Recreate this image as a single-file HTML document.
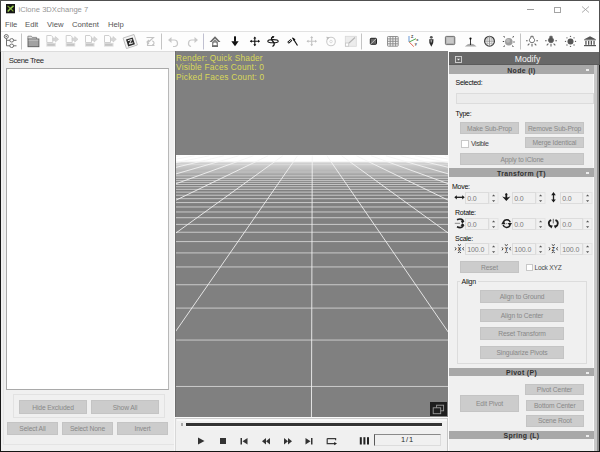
<!DOCTYPE html>
<html><head><meta charset="utf-8">
<style>
*{box-sizing:border-box;margin:0;padding:0}
html,body{width:600px;height:452px;overflow:hidden;background:#f0f0f0;font-family:"Liberation Sans",sans-serif}
.a{position:absolute}
.t{position:absolute;white-space:nowrap;line-height:1}
.btn{position:absolute;background:#cccccc;border:1px solid #c4c4c4;color:#888;font-size:6.7px;letter-spacing:-0.12px;text-align:center;white-space:nowrap;display:flex;align-items:center;justify-content:center}
.hdr{position:absolute;left:449px;width:145px;background:#a8a8a8;color:#303030;font-weight:bold;font-size:6.9px;letter-spacing:0.35px;text-align:center;padding-top:0.8px}
.hdr i{position:absolute;right:5px;top:4.4px;width:3px;height:1.2px;background:#ececec}
.lbl{position:absolute;font-size:7px;color:#151515;white-space:nowrap;line-height:1;letter-spacing:-0.25px;color:#0a0a0a}
.fld{position:absolute;background:#f0f0f0;border:1px solid #dcdcdc;color:#7a7a7a;font-size:7px;line-height:11px;padding-left:1.2px;white-space:nowrap;letter-spacing:-0.1px}
.spin{position:absolute;width:9px;border:1px solid #e6e6e6;border-left:none}
.spin:before,.spin:after{content:"";position:absolute;left:3px;width:0;height:0;border-left:1.6px solid transparent;border-right:1.6px solid transparent}
.spin:before{top:2.4px;border-bottom:1.8px solid #555}
.spin:after{bottom:1.6px;border-top:1.8px solid #555}
.tb{position:absolute;top:34px;width:16px;height:16px}
.sep{position:absolute;top:33px;width:1px;height:16px;background:#c8c8c8}
</style></head><body>
<!-- window frame -->
<div class="a" style="left:0;top:0;width:600px;height:452px;background:#f0f0f0"></div>
<!-- title bar + menu -->
<div class="a" style="left:0;top:0;width:600px;height:32px;background:#fff"></div>
<div class="a" style="left:0;top:31px;width:600px;height:1px;background:#e2e2e2"></div>
<!-- logo -->
<svg class="a" style="left:5.8px;top:4.4px" width="9" height="9.3" viewBox="0 0 9 9.3">
<rect width="9" height="9.3" fill="#151515"/>
<path d="M1.6 2 Q4.5 4.2 7.4 7.4" stroke="#7fa838" stroke-width="1.1" fill="none"/><path d="M1.7 7.4 Q4.3 4.4 7.5 1.8" stroke="#95c64a" stroke-width="1.5" fill="none"/>
</svg>
<div class="t" style="left:18.5px;top:6px;font-size:7.6px;color:#969696">iClone 3DXchange 7</div>
<!-- window controls -->
<div class="a" style="left:526.5px;top:9px;width:7px;height:1px;background:#a0a0a0"></div>
<div class="a" style="left:554px;top:6.5px;width:7px;height:6px;border:1px solid #a4a4a4"></div>
<svg class="a" style="left:581px;top:6px" width="9" height="7" viewBox="0 0 9 7"><path d="M1 0.5 L8 6.5 M8 0.5 L1 6.5" stroke="#9a9a9a" stroke-width="0.8"/></svg>
<!-- menu -->
<div class="t" style="left:5px;top:21px;font-size:7.7px;color:#555">File</div>
<div class="t" style="left:25px;top:21px;font-size:7.7px;color:#555">Edit</div>
<div class="t" style="left:47px;top:21px;font-size:7.7px;color:#555">View</div>
<div class="t" style="left:72px;top:21px;font-size:7.7px;color:#555">Content</div>
<div class="t" style="left:108px;top:21px;font-size:7.7px;color:#555">Help</div>

<!-- toolbar -->
<div class="a" style="left:0;top:32px;width:600px;height:20px;background:#fdfdfd"></div>
<div class="a" style="left:0;top:51px;width:175px;height:1px;background:#dcdcdc"></div>
<svg class="a" style="left:0;top:0" width="600" height="52" viewBox="0 0 600 52"><path d="M21.5 33.5 V49.5" stroke="#c4c4c4" stroke-width="1"/><path d="M161.5 33.5 V49.5" stroke="#c4c4c4" stroke-width="1"/><path d="M203.5 33.5 V49.5" stroke="#c0c0d0" stroke-width="1"/><path d="M361.5 33.5 V49.5" stroke="#c4c4c4" stroke-width="1"/><path d="M520.5 33.5 V49.5" stroke="#c4c4c4" stroke-width="1"/><g fill="none" stroke="#6e6e6e" stroke-width="1"><circle cx="6.3" cy="36.5" r="2"/><path d="M6.5 38.5 V45.8 H10 M6.5 40.3 H10 M13.6 40.3 H16.5 M13.6 45.8 H16.5"/><rect x="9.8" y="38.6" width="3.8" height="3.4" rx="1.7"/><rect x="9.8" y="44.1" width="3.8" height="3.4" rx="1.7"/></g><circle cx="6.3" cy="36.5" r="0.8" fill="#777"/><path d="M27.9 39.2 V36.2 H31.4 L32.2 37.4 H36.6 V39.2" fill="#e0e0e0" stroke="#7a7a7a" stroke-width="0.8"/><rect x="28" y="39" width="10.9" height="7.7" fill="#a2a2a2" stroke="#5a5a5a" stroke-width="0.9"/><rect x="28.6" y="39.6" width="9.7" height="1" fill="#c8c8c8"/><g fill="none" stroke="#cfcfcf" stroke-width="1"><path d="M46.8 35.5 H51.3 L52.8 37 V42.5 H46.8 Z"/></g><path d="M52.8 38.2 H55.3 V36.5 L58.599999999999994 39.3 L55.3 42.1 V40.4 H52.8 Z" fill="#d6d6d6" stroke="#c8c8c8" stroke-width="0.6"/><rect x="46.3" y="43" width="9.5" height="3.6" fill="#dedede"/><rect x="47.3" y="43.8" width="7.5" height="2" fill="#c4c4c4"/><g fill="none" stroke="#cfcfcf" stroke-width="1"><path d="M66.2 35.5 H70.7 L72.2 37 V42.5 H66.2 Z"/></g><path d="M72.2 38.2 H74.7 V36.5 L78.0 39.3 L74.7 42.1 V40.4 H72.2 Z" fill="#d6d6d6" stroke="#c8c8c8" stroke-width="0.6"/><rect x="65.7" y="43" width="9.5" height="3.6" fill="#dedede"/><rect x="66.7" y="43.8" width="7.5" height="2" fill="#c4c4c4"/><g fill="none" stroke="#cfcfcf" stroke-width="1"><path d="M85.5 35.5 H90 L91.5 37 V42.5 H85.5 Z"/></g><path d="M91.5 38.2 H94 V36.5 L97.3 39.3 L94 42.1 V40.4 H91.5 Z" fill="#d6d6d6" stroke="#c8c8c8" stroke-width="0.6"/><rect x="85" y="43" width="9.5" height="3.6" fill="#dedede"/><rect x="86" y="43.8" width="7.5" height="2" fill="#c4c4c4"/><g fill="none" stroke="#cfcfcf" stroke-width="1"><path d="M104.5 35.5 H109 L110.5 37 V42.5 H104.5 Z"/></g><path d="M110.5 38.2 H113 V36.5 L116.3 39.3 L113 42.1 V40.4 H110.5 Z" fill="#d6d6d6" stroke="#c8c8c8" stroke-width="0.6"/><rect x="104" y="43" width="9.5" height="3.6" fill="#dedede"/><rect x="105" y="43.8" width="7.5" height="2" fill="#c4c4c4"/><g transform="rotate(-18 130.3 41.5)"><rect x="124.5" y="36" width="11.5" height="11" fill="#f4f4f4" stroke="#bdbdbd" stroke-width="0.9"/><rect x="126.8" y="38.3" width="7" height="7.3" fill="#2a2a2a"/><path d="M128.2 40 H132.3 L128.6 43.6 H132.6" stroke="#f0f0f0" stroke-width="0.9" fill="none"/></g><g fill="none" stroke="#c4c4c4" stroke-width="1.1"><path d="M146.5 37.5 H153.5 L147.5 43 V45.5 H154.5 M149 40 L147 42 L149 44 M152 41 A2 2 0 0 1 152 45"/></g><g fill="none" stroke="#c8c8c8" stroke-width="1.2"><path d="M170 40 H174 A3.3 3.3 0 0 1 175 46.5 L173 46.5"/><path d="M196 40 H192 A3.3 3.3 0 0 0 191 46.5 L190 46.5"/></g><path d="M168 40 L171.5 37 V43 Z M198 40 L194.5 37 V43 Z" fill="#c8c8c8"/><path d="M209.5 42 L215 36.3 L220.5 42 H218.5 L215 38.6 L211.5 42 Z" fill="#666"/><path d="M212 42 L215 39.2 L218 42 V46.7 H212 Z" fill="#888"/><path d="M213.3 44 A1.7 1.5 0 0 1 216.7 44 L216.7 45.2 H213.3 Z" fill="#fff"/><rect x="212" y="45.6" width="6" height="1.1" fill="#555"/><rect x="234" y="36.7" width="2" height="5" fill="#111"/><circle cx="235" cy="37.2" r="1" fill="#111"/><path d="M231.3 41.3 H238.7 L235 46.2 Z" fill="#111"/><g stroke="#111" stroke-width="1.1"><path d="M254.8 37.5 V45.5 M250.5 41.3 H259.3"/></g><g fill="#111"><path d="M254.8 36.5 L256.3 38.5 H253.3Z M254.8 46.2 L256.3 44.2 H253.3Z M249.8 41.3 L251.8 39.8 V42.8Z M260 41.3 L258 39.8 V42.8Z"/></g><g fill="none" stroke="#111"><ellipse cx="273" cy="41.2" rx="5.2" ry="1.6" stroke-width="1.1"/><path d="M273.5 37 C270.5 37 271.5 40 273 41.5 C274.5 43 275 45 272.5 46.5" stroke-width="1.3"/></g><path d="M272 36 L274.5 36.3 L273 38.2Z" fill="#111"/><g fill="none" stroke="#111"><path d="M288 42.8 L291.5 39.8" stroke-width="2.3"/><path d="M292.7 38 L297.5 45.5" stroke-width="1.2"/></g><path d="M292 37.2 L295.5 39.3 L293.8 41Z" fill="#111"/><path d="M288.6 42.3 L291 40.2" stroke="#fff" stroke-width="0.8"/><g stroke="#c4c4c4" stroke-width="1.1"><path d="M311.7 37.2 V45.3 M307.2 41.2 H316.2"/></g><g fill="#c0c0c0"><path d="M311.7 36 L313.2 38 H310.2Z M311.7 46.3 L313.2 44.3 H310.2Z M306.5 41.2 L308.5 39.7 V42.7Z M317 41.2 L315 39.7 V42.7Z"/></g><circle cx="331" cy="41.5" r="4.3" fill="none" stroke="#cbcbcb" stroke-width="1.1"/><circle cx="331" cy="41.5" r="1.3" fill="none" stroke="#d4d4d4" stroke-width="0.8"/><path d="M326.3 36.8 L329.8 37.3 L327.3 40Z" fill="#bdbdbd"/><rect x="345.3" y="36.3" width="11" height="10" fill="#ececec" stroke="#d8d8d8" stroke-width="0.8"/><path d="M349 43 L355 37.5" stroke="#b4b4b4" stroke-width="1.1"/><rect x="345.5" y="43" width="3.2" height="3.2" fill="#fff" stroke="#c4c4c4" stroke-width="0.8"/><rect x="370.3" y="38.3" width="6.2" height="6" rx="0.8" fill="#666" stroke="#222" stroke-width="1"/><path d="M371 43.8 L376 38.8" stroke="#ccc" stroke-width="0.9"/><rect x="387" y="36" width="11.7" height="10.7" fill="#f4f4f4"/><g stroke="#888" stroke-width="0.9" fill="none"><rect x="387.5" y="36.5" width="10.7" height="9.7" rx="0.8"/><path d="M390.2 36.5 V46.2 M392.9 36.5 V46.2 M395.6 36.5 V46.2 M387.5 38.9 H398.2 M387.5 41.3 H398.2 M387.5 43.8 H398.2"/></g><path d="M409 42 V36" stroke="#8ab0e0" stroke-width="1.3"/><path d="M409.2 42 L416 38.7" stroke="#50a850" stroke-width="1"/><path d="M409.2 42 L413.8 46.6" stroke="#e06050" stroke-width="1"/><text x="411" y="38.3" font-size="3.8" font-weight="bold" fill="#333" font-family="Liberation Sans">Z</text><text x="416.3" y="40.6" font-size="3.8" font-weight="bold" fill="#333" font-family="Liberation Sans">x</text><text x="414.8" y="45.4" font-size="3.8" font-weight="bold" fill="#333" font-family="Liberation Sans">y</text><circle cx="431.3" cy="37.3" r="1.4" fill="#555"/><path d="M429.2 39.3 H433.5 L433.2 43 L431.3 46.7 L429.4 43Z" fill="#2a2a2a"/><path d="M430.4 40 H432.2 L431.9 42.5 H430.7Z" fill="#999"/><rect x="445.4" y="36.4" width="9.4" height="8.2" rx="1" fill="#b0b0b0" stroke="#555" stroke-width="0.8"/><rect x="446.6" y="37.4" width="7" height="5.6" fill="#c8c8c8"/><path d="M464.8 46.6 Q470.7 40.5 476.6 46.6 Z" fill="#a8a8a8"/><path d="M470.5 39 V45" stroke="#222" stroke-width="0.9"/><circle cx="470.5" cy="38.6" r="1.1" fill="#111"/><circle cx="489.5" cy="41.2" r="4.9" fill="#f6f6f6" stroke="#3a3a3a" stroke-width="1.2"/><g stroke="#777" stroke-width="0.7" fill="none"><path d="M485 41.2 H494 M489.5 36.5 V46"/><path d="M486 39 H493 M486 43.4 H493" stroke="#aaa"/><ellipse cx="489.5" cy="41.2" rx="2.4" ry="4.6" stroke="#aaa"/></g><circle cx="508.8" cy="41.8" r="3.8" fill="#9c9c9c"/><circle cx="508" cy="40.8" r="2" fill="#b8b8b8"/><g stroke="#444" stroke-width="1"><path d="M503.5 36.5 L505 37.2 M514 36.5 L512.5 37.2 M503.5 46.5 L505 45.8 M513.5 46.5 L512 45.8 M514.7 42 H513.3 M502.8 41.5 H504.2"/></g><g fill="none" stroke="#666" stroke-width="1.1"><path d="M526 40.8 H527.7 M536.3 40.8 H538 M527.7 45.4 L529.4 43.6 M536.3 45.4 L534.6 43.6 M532 44 V46.4"/></g><path d="M530.9 36.3 H533.1 V37.8 A2.6 2.6 0 1 1 530.9 37.8 Z" fill="#fff" stroke="#666" stroke-width="1"/><g fill="none" stroke="#666" stroke-width="1.1"><path d="M545 40.8 H546.7 M555.3 40.8 H557 M546.7 45.4 L548.4 43.6 M555.3 45.4 L553.6 43.6 M551 44 V46.4"/></g><path d="M549.9 36.3 H552.1 V37.8 A2.6 2.6 0 1 1 549.9 37.8 Z" fill="#555" stroke="#666" stroke-width="1"/><circle cx="570.5" cy="41.4" r="3" fill="#555"/><g fill="#666"><circle cx="575.50" cy="41.40" r="0.7"/><circle cx="574.04" cy="44.94" r="0.7"/><circle cx="570.50" cy="46.40" r="0.7"/><circle cx="566.96" cy="44.94" r="0.7"/><circle cx="565.50" cy="41.40" r="0.7"/><circle cx="566.96" cy="37.86" r="0.7"/><circle cx="570.50" cy="36.40" r="0.7"/><circle cx="574.04" cy="37.86" r="0.7"/></g><g fill="#555"><path d="M584.2 39.3 L590 36.2 L595.8 39.3 Z"/><rect x="584.2" y="39.3" width="11.6" height="1"/><rect x="585.3" y="40.8" width="1.3" height="4"/><rect x="588" y="40.8" width="1.3" height="4"/><rect x="590.7" y="40.8" width="1.3" height="4"/><rect x="593.4" y="40.8" width="1.3" height="4"/><rect x="584" y="45" width="12" height="1.2"/></g></svg>

<!-- left panel -->
<div class="a" style="left:3px;top:52px;width:1px;height:393px;background:#e4e4e4"></div>
<div class="t" style="left:8.8px;top:57.2px;font-size:7.7px;letter-spacing:-0.45px;color:#2a2a2a">Scene Tree</div>
<div class="a" style="left:6px;top:68px;width:163px;height:322px;background:#fff;border:1px solid #a9a9a9;border-right-color:#b8b8b8;border-bottom-color:#a9a9a9"></div>
<div class="a" style="left:13px;top:394px;width:152px;height:24px;border:1px solid #e2e2e2"></div>
<div class="btn" style="left:19px;top:400px;width:68px;height:14px">Hide Excluded</div>
<div class="btn" style="left:91px;top:400px;width:68px;height:14px">Show All</div>
<div class="btn" style="left:7px;top:421.6px;width:51px;height:13.6px">Select All</div>
<div class="btn" style="left:62px;top:421.6px;width:51px;height:13.6px">Select None</div>
<div class="btn" style="left:117px;top:421.6px;width:51px;height:13.6px">Invert</div>
<div class="a" style="left:3px;top:444px;width:171px;height:1px;background:#e4e4e4"></div>
<div class="a" style="left:174px;top:52px;width:1px;height:399px;background:#f8f8f8"></div>

<!-- viewport -->
<div class="a" style="left:175px;top:51px;width:273px;height:366px;background:#808080;overflow:hidden">
<svg class="a" style="left:0;top:0" width="273" height="366"><g stroke="#f4f4f4" stroke-width="1" fill="none" stroke-opacity="0.85">
<g fill="#fff" stroke="none"><rect x="0" y="104" width="273" height="1" fill-opacity="1.000"/>
<rect x="0" y="105" width="273" height="1" fill-opacity="1.000"/>
<rect x="0" y="106" width="273" height="1" fill-opacity="1.000"/>
<rect x="0" y="107" width="273" height="1" fill-opacity="1.000"/>
<rect x="0" y="108" width="273" height="1" fill-opacity="1.000"/>
<rect x="0" y="109" width="273" height="1" fill-opacity="1.000"/>
<rect x="0" y="110" width="273" height="1" fill-opacity="0.930"/>
<rect x="0" y="111" width="273" height="1" fill-opacity="0.720"/>
<rect x="0" y="112" width="273" height="1" fill-opacity="0.625"/>
<rect x="0" y="113" width="273" height="1" fill-opacity="0.682"/>
<rect x="0" y="114" width="273" height="1" fill-opacity="0.591"/>
<rect x="0" y="115" width="273" height="1" fill-opacity="0.550"/>
<rect x="0" y="116" width="273" height="1" fill-opacity="0.526"/>
<rect x="0" y="117" width="273" height="1" fill-opacity="0.500"/>
<rect x="0" y="118" width="273" height="1" fill-opacity="0.470"/>
<rect x="0" y="119" width="273" height="1" fill-opacity="0.436"/>
<rect x="0" y="120" width="273" height="1" fill-opacity="0.464"/>
<rect x="0" y="121" width="273" height="1" fill-opacity="0.462"/>
<rect x="0" y="122" width="273" height="1" fill-opacity="0.357"/>
<rect x="0" y="123" width="273" height="1" fill-opacity="0.307"/>
<rect x="0" y="124" width="273" height="1" fill-opacity="0.478"/>
<rect x="0" y="125" width="273" height="1" fill-opacity="0.316"/>
<rect x="0" y="126" width="273" height="1" fill-opacity="0.231"/>
<rect x="0" y="127" width="273" height="1" fill-opacity="0.510"/>
<rect x="0" y="128" width="273" height="1" fill-opacity="0.115"/>
<rect x="0" y="129" width="273" height="1" fill-opacity="0.488"/>
<rect x="0" y="130" width="273" height="1" fill-opacity="0.104"/>
<rect x="0" y="131" width="273" height="1" fill-opacity="0.463"/>
<rect x="0" y="132" width="273" height="1" fill-opacity="0.037"/>
<rect x="0" y="133" width="273" height="1" fill-opacity="0.539"/>
<rect x="0" y="135" width="273" height="1" fill-opacity="0.434"/>
<rect x="0" y="136" width="273" height="1" fill-opacity="0.146"/>
<rect x="0" y="137" width="273" height="1" fill-opacity="0.119"/>
<rect x="0" y="138" width="273" height="1" fill-opacity="0.461"/>
<rect x="0" y="140" width="273" height="1" fill-opacity="0.231"/>
<rect x="0" y="141" width="273" height="1" fill-opacity="0.349"/>
<rect x="0" y="143" width="273" height="1" fill-opacity="0.167"/>
<rect x="0" y="144" width="273" height="1" fill-opacity="0.413"/>
<rect x="0" y="147" width="273" height="1" fill-opacity="0.476"/>
<rect x="0" y="148" width="273" height="1" fill-opacity="0.104"/>
<rect x="0" y="151" width="273" height="1" fill-opacity="0.540"/>
<rect x="0" y="152" width="273" height="1" fill-opacity="0.040"/>
<rect x="0" y="155" width="273" height="1" fill-opacity="0.311"/>
<rect x="0" y="156" width="273" height="1" fill-opacity="0.269"/>
<rect x="0" y="160" width="273" height="1" fill-opacity="0.309"/>
<rect x="0" y="161" width="273" height="1" fill-opacity="0.271"/>
<rect x="0" y="166" width="273" height="1" fill-opacity="0.455"/>
<rect x="0" y="167" width="273" height="1" fill-opacity="0.125"/>
<rect x="0" y="172" width="273" height="1" fill-opacity="0.063"/>
<rect x="0" y="173" width="273" height="1" fill-opacity="0.517"/>
<rect x="0" y="180" width="273" height="1" fill-opacity="0.154"/>
<rect x="0" y="181" width="273" height="1" fill-opacity="0.426"/>
<rect x="0" y="190" width="273" height="1" fill-opacity="0.532"/>
<rect x="0" y="191" width="273" height="1" fill-opacity="0.048"/>
<rect x="0" y="201" width="273" height="1" fill-opacity="0.339"/>
<rect x="0" y="202" width="273" height="1" fill-opacity="0.241"/>
<rect x="0" y="215" width="273" height="1" fill-opacity="0.325"/>
<rect x="0" y="216" width="273" height="1" fill-opacity="0.255"/>
<rect x="0" y="233" width="273" height="1" fill-opacity="0.439"/>
<rect x="0" y="234" width="273" height="1" fill-opacity="0.141"/>
<rect x="0" y="256" width="273" height="1" fill-opacity="0.238"/>
<rect x="0" y="257" width="273" height="1" fill-opacity="0.342"/>
<rect x="0" y="288" width="273" height="1" fill-opacity="0.262"/>
<rect x="0" y="289" width="273" height="1" fill-opacity="0.318"/>
<rect x="0" y="334" width="273" height="1" fill-opacity="0.024"/>
<rect x="0" y="335" width="273" height="1" fill-opacity="0.556"/></g><line x1="-451.50" y1="104.80" x2="-7671.85" y2="366.00"/>
<line x1="-436.78" y1="104.80" x2="-7476.64" y2="366.00"/>
<line x1="-422.06" y1="104.80" x2="-7281.43" y2="366.00"/>
<line x1="-407.34" y1="104.80" x2="-7086.22" y2="366.00"/>
<line x1="-392.62" y1="104.80" x2="-6891.02" y2="366.00"/>
<line x1="-377.90" y1="104.80" x2="-6695.81" y2="366.00"/>
<line x1="-363.19" y1="104.80" x2="-6500.60" y2="366.00"/>
<line x1="-348.47" y1="104.80" x2="-6305.39" y2="366.00"/>
<line x1="-333.75" y1="104.80" x2="-6110.19" y2="366.00"/>
<line x1="-319.03" y1="104.80" x2="-5914.98" y2="366.00"/>
<line x1="-304.31" y1="104.80" x2="-5719.77" y2="366.00"/>
<line x1="-289.59" y1="104.80" x2="-5524.56" y2="366.00"/>
<line x1="-274.88" y1="104.80" x2="-5329.36" y2="366.00"/>
<line x1="-260.16" y1="104.80" x2="-5134.15" y2="366.00"/>
<line x1="-245.44" y1="104.80" x2="-4938.94" y2="366.00"/>
<line x1="-230.72" y1="104.80" x2="-4743.73" y2="366.00"/>
<line x1="-216.00" y1="104.80" x2="-4548.53" y2="366.00"/>
<line x1="-201.28" y1="104.80" x2="-4353.32" y2="366.00"/>
<line x1="-186.57" y1="104.80" x2="-4158.11" y2="366.00"/>
<line x1="-171.85" y1="104.80" x2="-3962.90" y2="366.00"/>
<line x1="-157.13" y1="104.80" x2="-3767.70" y2="366.00"/>
<line x1="-142.41" y1="104.80" x2="-3572.49" y2="366.00"/>
<line x1="-127.69" y1="104.80" x2="-3377.28" y2="366.00"/>
<line x1="-112.98" y1="104.80" x2="-3182.07" y2="366.00"/>
<line x1="-98.26" y1="104.80" x2="-2986.87" y2="366.00"/>
<line x1="-83.54" y1="104.80" x2="-2791.66" y2="366.00"/>
<line x1="-68.82" y1="104.80" x2="-2596.45" y2="366.00"/>
<line x1="-54.10" y1="104.80" x2="-2401.24" y2="366.00"/>
<line x1="-39.38" y1="104.80" x2="-2206.04" y2="366.00"/>
<line x1="-24.67" y1="104.80" x2="-2010.83" y2="366.00"/>
<line x1="-9.95" y1="104.80" x2="-1815.62" y2="366.00"/>
<line x1="4.77" y1="104.80" x2="-1620.41" y2="366.00"/>
<line x1="19.49" y1="104.80" x2="-1425.21" y2="366.00"/>
<line x1="34.21" y1="104.80" x2="-1230.00" y2="366.00"/>
<line x1="48.93" y1="104.80" x2="-1034.79" y2="366.00"/>
<line x1="63.64" y1="104.80" x2="-839.58" y2="366.00"/>
<line x1="78.36" y1="104.80" x2="-644.38" y2="366.00"/>
<line x1="93.08" y1="104.80" x2="-449.17" y2="366.00"/>
<line x1="107.80" y1="104.80" x2="-253.96" y2="366.00"/>
<line x1="122.52" y1="104.80" x2="-58.75" y2="366.00"/>
<line x1="137.24" y1="104.80" x2="136.45" y2="366.00"/>
<line x1="151.95" y1="104.80" x2="331.66" y2="366.00"/>
<line x1="166.67" y1="104.80" x2="526.87" y2="366.00"/>
<line x1="181.39" y1="104.80" x2="722.08" y2="366.00"/>
<line x1="196.11" y1="104.80" x2="917.28" y2="366.00"/>
<line x1="210.83" y1="104.80" x2="1112.49" y2="366.00"/>
<line x1="225.55" y1="104.80" x2="1307.70" y2="366.00"/>
<line x1="240.26" y1="104.80" x2="1502.90" y2="366.00"/>
<line x1="254.98" y1="104.80" x2="1698.11" y2="366.00"/>
<line x1="269.70" y1="104.80" x2="1893.32" y2="366.00"/>
<line x1="284.42" y1="104.80" x2="2088.53" y2="366.00"/>
<line x1="299.14" y1="104.80" x2="2283.73" y2="366.00"/>
<line x1="313.86" y1="104.80" x2="2478.94" y2="366.00"/>
<line x1="328.57" y1="104.80" x2="2674.15" y2="366.00"/>
<line x1="343.29" y1="104.80" x2="2869.36" y2="366.00"/>
<line x1="358.01" y1="104.80" x2="3064.56" y2="366.00"/>
<line x1="372.73" y1="104.80" x2="3259.77" y2="366.00"/>
<line x1="387.45" y1="104.80" x2="3454.98" y2="366.00"/>
<line x1="402.17" y1="104.80" x2="3650.19" y2="366.00"/>
<line x1="416.88" y1="104.80" x2="3845.39" y2="366.00"/>
<line x1="431.60" y1="104.80" x2="4040.60" y2="366.00"/>
<line x1="446.32" y1="104.80" x2="4235.81" y2="366.00"/>
<line x1="461.04" y1="104.80" x2="4431.02" y2="366.00"/>
<line x1="475.76" y1="104.80" x2="4626.22" y2="366.00"/>
<line x1="490.48" y1="104.80" x2="4821.43" y2="366.00"/>
<line x1="505.19" y1="104.80" x2="5016.64" y2="366.00"/>
<line x1="519.91" y1="104.80" x2="5211.85" y2="366.00"/>
<line x1="534.63" y1="104.80" x2="5407.06" y2="366.00"/>
<line x1="549.35" y1="104.80" x2="5602.26" y2="366.00"/>
<line x1="564.07" y1="104.80" x2="5797.47" y2="366.00"/>
<line x1="578.79" y1="104.80" x2="5992.68" y2="366.00"/>
<line x1="593.50" y1="104.80" x2="6187.89" y2="366.00"/>
<line x1="608.22" y1="104.80" x2="6383.09" y2="366.00"/>
<line x1="622.94" y1="104.80" x2="6578.30" y2="366.00"/>
<line x1="637.66" y1="104.80" x2="6773.51" y2="366.00"/>
<line x1="652.38" y1="104.80" x2="6968.72" y2="366.00"/>
<line x1="667.09" y1="104.80" x2="7163.92" y2="366.00"/>
<line x1="681.81" y1="104.80" x2="7359.13" y2="366.00"/>
<line x1="696.53" y1="104.80" x2="7554.34" y2="366.00"/>
<line x1="711.25" y1="104.80" x2="7749.54" y2="366.00"/>
<line x1="725.97" y1="104.80" x2="7944.75" y2="366.00"/>
</g></svg>
<div class="a" style="left:0;top:0;width:1px;height:366px;background:#6e6e6e"></div>
<div class="t" style="left:1px;top:2.8px;font-size:8.4px;color:#d8d85a;line-height:9.6px;letter-spacing:0.2px">Render: Quick Shader<br>Visible Faces Count: 0<br>Picked Faces Count: 0</div>
<div class="a" style="left:255px;top:351px;width:17px;height:14px;background:#1e1e1e"></div>
<svg class="a" style="left:255px;top:351px" width="17" height="14" viewBox="430 402 17 14"><rect x="436.6" y="405.2" width="7" height="5.6" fill="none" stroke="#9a9a9a" stroke-width="0.9"/><rect x="433.2" y="407.8" width="7.5" height="5.9" fill="#1e1e1e" stroke="#9a9a9a" stroke-width="0.9"/></svg>
</div>

<!-- timeline -->
<div class="a" style="left:175px;top:417px;width:273px;height:34px;background:#f0f0f0;border-left:1px solid #d8d8d8"></div>
<div class="a" style="left:175px;top:417px;width:273px;height:1px;background:#fafafa"></div>
<div class="a" style="left:176px;top:418px;width:271px;height:1px;background:#cdcdcd"></div>
<div class="a" style="left:177px;top:419px;width:270px;height:2px;background:#f8f8f8"></div>
<div class="a" style="left:186px;top:426px;width:256px;height:1px;background:#fafafa"></div>
<div class="a" style="left:447px;top:418px;width:1px;height:33px;background:#c8c8c8"></div>
<div class="a" style="left:180.8px;top:422.6px;width:2.2px;height:3.4px;background:#f8f8f8;border:0.6px solid #a8a8a8"></div>
<div class="a" style="left:186px;top:423px;width:256px;height:3px;background:#333"></div>
<svg class="a" style="left:196.0px;top:436.0px" width="10" height="10" viewBox="0 0 10 10"><path d="M2 1.5 L8.5 5 L2 8.5Z" fill="#333"/></svg>
<svg class="a" style="left:218.0px;top:436.0px" width="10" height="10" viewBox="0 0 10 10"><rect x="2" y="2" width="6" height="6" fill="#333"/></svg>
<svg class="a" style="left:239.0px;top:436.0px" width="10" height="10" viewBox="0 0 10 10"><rect x="1.5" y="2" width="1.5" height="6.5" fill="#333"/><path d="M8.5 2 L3.5 5.25 L8.5 8.5Z" fill="#333"/></svg>
<svg class="a" style="left:261.0px;top:436.0px" width="10" height="10" viewBox="0 0 10 10"><path d="M5 2 L1 5.25 L5 8.5Z M9 2 L5 5.25 L9 8.5Z" fill="#333"/></svg>
<svg class="a" style="left:283.0px;top:436.0px" width="10" height="10" viewBox="0 0 10 10"><path d="M1 2 L5 5.25 L1 8.5Z M5 2 L9 5.25 L5 8.5Z" fill="#333"/></svg>
<svg class="a" style="left:304.0px;top:436.0px" width="10" height="10" viewBox="0 0 10 10"><rect x="7" y="2" width="1.5" height="6.5" fill="#333"/><path d="M1.5 2 L6.5 5.25 L1.5 8.5Z" fill="#333"/></svg>
<svg class="a" style="left:326.0px;top:436.0px" width="12" height="10" viewBox="0 0 12 10"><path d="M1.2 2.6 H9.6 V4.2 M9.6 7.6 H1.2 V2.6" fill="none" stroke="#3a3a3a" stroke-width="1.2"/><path d="M8.2 6 L11 7.6 L8.2 9.2Z" fill="#222"/></svg>
<svg class="a" style="left:359.0px;top:436.0px" width="11" height="10" viewBox="0 0 11 10"><rect x="0.8" y="1.2" width="2" height="7.3" fill="#222"/><rect x="4.4" y="1.2" width="2" height="7.3" fill="#222"/><rect x="8" y="1.2" width="2" height="7.3" fill="#222"/></svg>
<div class="a" style="left:374px;top:434px;width:67px;height:12px;background:#f0f0f0;border:1px solid #dcdcdc;border-left-color:#5a5a5a;border-top-color:#8a8a8a"></div>
<div class="t" style="left:374px;top:436.3px;width:67px;text-align:center;font-size:7.5px;color:#2a2a2a;letter-spacing:0.8px">1/1</div>

<!-- right panel -->
<div class="a" style="left:448px;top:52px;width:1px;height:399px;background:#fbfbfb"></div>
<div class="a" style="left:449px;top:52px;width:150px;height:13px;background:#686868;border-bottom:1px solid #5c5c5c"></div>
<svg class="a" style="left:455px;top:55.8px" width="7" height="7" viewBox="0 0 7 7"><rect x="0.5" y="0.5" width="6" height="6" fill="none" stroke="#d4d4d4" stroke-width="0.9"/><path d="M2 2.8 H5 L3.5 4.6Z" fill="#f4f4f4"/></svg>
<div class="t" style="left:449px;top:55.2px;width:157px;text-align:center;font-size:8.7px;color:#f4f4f4">Modify</div>
<div class="a" style="left:593px;top:74px;width:1px;height:377px;background:#fbfbfb"></div>
<div class="a" style="left:594px;top:65px;width:5px;height:386px;background:#8e8e8e;border-left:3px solid #c8c8c8"></div>

<div class="hdr" style="top:65px;height:9px;line-height:9px">Node (I)<i></i></div>
<div class="lbl" style="left:455.5px;top:78.8px">Selected:</div>
<div class="a" style="left:456px;top:92.5px;width:137.5px;height:11.8px;background:#ececec;border:1px solid #dcdcdc"></div>
<div class="lbl" style="left:455.5px;top:109.8px">Type:</div>
<div class="btn" style="left:460px;top:122px;width:59px;height:12px">Make Sub-Prop</div>
<div class="btn" style="left:525px;top:122px;width:59px;height:12px">Remove Sub-Prop</div>
<div class="a" style="left:461px;top:140px;width:8px;height:8px;background:#fff;border:1px solid #c8c8c8"></div>
<div class="lbl" style="left:471px;top:140.4px;color:#444;letter-spacing:-0.45px">Visible</div>
<div class="btn" style="left:525px;top:137px;width:59px;height:11px">Merge Identical</div>
<div class="btn" style="left:460px;top:153px;width:124px;height:12px">Apply to iClone</div>

<div class="hdr" style="top:168px;height:9px;line-height:9px">Transform (T)<i></i></div>
<div class="lbl" style="left:452px;top:183px">Move:</div>
<div class="fld" style="left:465px;top:192px;width:24px;height:12px">0.0</div>
<svg class="a" style="left:489px;top:192px" width="10" height="12" viewBox="0 0 10 12"><rect x="0" y="0.5" width="9" height="11" fill="none" stroke="#e4e4e4" stroke-width="1"/><path d="M3 4.2 L4.6 2.4 L6.2 4.2Z M3 8.2 L4.6 10 L6.2 8.2Z" fill="#555"/></svg>
<div class="fld" style="left:512px;top:192px;width:24px;height:12px">0.0</div>
<svg class="a" style="left:536px;top:192px" width="10" height="12" viewBox="0 0 10 12"><rect x="0" y="0.5" width="9" height="11" fill="none" stroke="#e4e4e4" stroke-width="1"/><path d="M3 4.2 L4.6 2.4 L6.2 4.2Z M3 8.2 L4.6 10 L6.2 8.2Z" fill="#555"/></svg>
<div class="fld" style="left:560px;top:192px;width:23px;height:12px">0.0</div>
<svg class="a" style="left:583px;top:192px" width="10" height="12" viewBox="0 0 10 12"><rect x="0" y="0.5" width="9" height="11" fill="none" stroke="#e4e4e4" stroke-width="1"/><path d="M3 4.2 L4.6 2.4 L6.2 4.2Z M3 8.2 L4.6 10 L6.2 8.2Z" fill="#555"/></svg>
<div class="fld" style="left:465px;top:218px;width:24px;height:12px">0.0</div>
<svg class="a" style="left:489px;top:218px" width="10" height="12" viewBox="0 0 10 12"><rect x="0" y="0.5" width="9" height="11" fill="none" stroke="#e4e4e4" stroke-width="1"/><path d="M3 4.2 L4.6 2.4 L6.2 4.2Z M3 8.2 L4.6 10 L6.2 8.2Z" fill="#555"/></svg>
<div class="fld" style="left:512px;top:218px;width:24px;height:12px">0.0</div>
<svg class="a" style="left:536px;top:218px" width="10" height="12" viewBox="0 0 10 12"><rect x="0" y="0.5" width="9" height="11" fill="none" stroke="#e4e4e4" stroke-width="1"/><path d="M3 4.2 L4.6 2.4 L6.2 4.2Z M3 8.2 L4.6 10 L6.2 8.2Z" fill="#555"/></svg>
<div class="fld" style="left:560px;top:218px;width:23px;height:12px">0.0</div>
<svg class="a" style="left:583px;top:218px" width="10" height="12" viewBox="0 0 10 12"><rect x="0" y="0.5" width="9" height="11" fill="none" stroke="#e4e4e4" stroke-width="1"/><path d="M3 4.2 L4.6 2.4 L6.2 4.2Z M3 8.2 L4.6 10 L6.2 8.2Z" fill="#555"/></svg>
<div class="fld" style="left:465px;top:243px;width:24px;height:12px">100.0</div>
<svg class="a" style="left:489px;top:243px" width="10" height="12" viewBox="0 0 10 12"><rect x="0" y="0.5" width="9" height="11" fill="none" stroke="#e4e4e4" stroke-width="1"/><path d="M3 4.2 L4.6 2.4 L6.2 4.2Z M3 8.2 L4.6 10 L6.2 8.2Z" fill="#555"/></svg>
<div class="fld" style="left:512px;top:243px;width:24px;height:12px">100.0</div>
<svg class="a" style="left:536px;top:243px" width="10" height="12" viewBox="0 0 10 12"><rect x="0" y="0.5" width="9" height="11" fill="none" stroke="#e4e4e4" stroke-width="1"/><path d="M3 4.2 L4.6 2.4 L6.2 4.2Z M3 8.2 L4.6 10 L6.2 8.2Z" fill="#555"/></svg>
<div class="fld" style="left:560px;top:243px;width:23px;height:12px">100.0</div>
<svg class="a" style="left:583px;top:243px" width="10" height="12" viewBox="0 0 10 12"><rect x="0" y="0.5" width="9" height="11" fill="none" stroke="#e4e4e4" stroke-width="1"/><path d="M3 4.2 L4.6 2.4 L6.2 4.2Z M3 8.2 L4.6 10 L6.2 8.2Z" fill="#555"/></svg>
<svg class="a" style="left:0;top:0" width="600" height="260" viewBox="0 0 600 260"><path d="M456 197.3 H463" stroke="#1a1a1a" stroke-width="1.3"/><path d="M454.3 197.3 L456.8 195.2 V199.4Z M464.7 197.3 L462.2 195.2 V199.4Z" fill="#1a1a1a"/><path d="M506.3 193.6 V198" stroke="#1a1a1a" stroke-width="1.8"/><path d="M504.9 194.8 L506.3 193 L507.7 194.8Z" fill="#1a1a1a"/><path d="M502.2 196.6 L506.3 197.8 L510.4 196.6 L506.3 201Z" fill="#1a1a1a"/><path d="M553.5 194.5 V200.2" stroke="#222" stroke-width="1.3"/><path d="M553.5 192.1 L555.8 195.2 H551.2Z M553.5 202.6 L555.8 199.5 H551.2Z" fill="#1a1a1a"/><path d="M454.8 223.3 H460" stroke="#888" stroke-width="1"/><path d="M457 219.8 C460.8 218 463.6 219.6 462.9 222 M457 226.8 C460.8 228.6 463.6 227 462.9 224.6" fill="none" stroke="#1e1e1e" stroke-width="1.7"/><path d="M460.6 220.6 L464.6 221 L462.2 223.6Z M460.6 226 L464.6 225.6 L462.2 223Z" fill="#1e1e1e"/><path d="M503.4 221.8 A3.8 3.8 0 0 1 510.3 222.2 M510 225.4 A3.8 3.8 0 0 1 503.1 225" fill="none" stroke="#1e1e1e" stroke-width="1.5"/><path d="M501.3 224.2 L503.4 220.6 L505.6 224.2Z M512 223 L509.9 226.6 L507.7 223Z" fill="#1e1e1e"/><circle cx="506.7" cy="223.6" r="0.7" fill="#777"/><path d="M553.3 218.8 V223.4" stroke="#666" stroke-width="1"/><path d="M551.2 220.2 C548 221.2 548 225.2 551 226.6 M555.4 220.2 C558.6 221.2 558.6 225.2 555.6 226.6" fill="none" stroke="#1e1e1e" stroke-width="1.8"/><path d="M549.2 225.2 L552.8 225.6 L551.4 228.6Z M557.4 225.2 L553.8 225.6 L555.2 228.6Z" fill="#1e1e1e"/><g fill="none" stroke="#2a2a2a" stroke-width="0.9"><path d="M457.9 244.5 L459.4 245.5 L460.9 244.5 M457.9 252.8 L459.4 251.8 L460.9 252.8 M455.09999999999997 247.3 L456.09999999999997 248.8 L455.09999999999997 250.3 M463.7 247.3 L462.7 248.8 L463.7 250.3"/></g><text x="459.4" y="250.8" font-size="5" font-weight="bold" text-anchor="middle" fill="#222" font-family="Liberation Sans">X</text><g fill="none" stroke="#2a2a2a" stroke-width="0.9"><path d="M504.8 244.5 L506.3 245.5 L507.8 244.5 M504.8 252.8 L506.3 251.8 L507.8 252.8 M502.0 247.3 L503.0 248.8 L502.0 250.3 M510.6 247.3 L509.6 248.8 L510.6 250.3"/></g><text x="506.3" y="250.8" font-size="5" font-weight="bold" text-anchor="middle" fill="#222" font-family="Liberation Sans">Y</text><g fill="none" stroke="#2a2a2a" stroke-width="0.9"><path d="M551.8 244.5 L553.3 245.5 L554.8 244.5 M551.8 252.8 L553.3 251.8 L554.8 252.8 M549.0 247.3 L550.0 248.8 L549.0 250.3 M557.5999999999999 247.3 L556.5999999999999 248.8 L557.5999999999999 250.3"/></g><text x="553.3" y="250.8" font-size="5" font-weight="bold" text-anchor="middle" fill="#222" font-family="Liberation Sans">Z</text></svg>
<div class="lbl" style="left:455px;top:209px">Rotate:</div>
<div class="lbl" style="left:455px;top:235px">Scale:</div>
<div class="btn" style="left:460px;top:261px;width:59px;height:12px">Reset</div>
<div class="a" style="left:525.5px;top:263.5px;width:7.3px;height:7.3px;background:#fff;border:1px solid #c8c8c8"></div>
<div class="lbl" style="left:534.6px;top:264.5px;color:#4a4a4a;font-size:6.6px;letter-spacing:-0.2px">Lock XYZ</div>

<div class="a" style="left:456.5px;top:280.5px;width:130.5px;height:83px;border:1px solid #dcdcdc"></div>
<div class="lbl" style="left:459.5px;top:278.3px;background:#f0f0f0;padding:0 2px;color:#111">Align</div>
<div class="btn" style="left:480px;top:290px;width:84px;height:13px">Align to Ground</div>
<div class="btn" style="left:480px;top:308.6px;width:84px;height:13px">Align to Center</div>
<div class="btn" style="left:480px;top:327px;width:84px;height:13.3px">Reset Transform</div>
<div class="btn" style="left:480px;top:346px;width:84px;height:13px">Singularize Pivots</div>

<div class="hdr" style="top:368px;height:8px;line-height:8px">Pivot (P)<i></i></div>
<div class="btn" style="left:460px;top:395px;width:59px;height:17px">Edit Pivot</div>
<div class="btn" style="left:525px;top:384px;width:59px;height:11px">Pivot Center</div>
<div class="btn" style="left:525.5px;top:399.5px;width:58.5px;height:11.2px">Bottom Center</div>
<div class="btn" style="left:525.5px;top:415.2px;width:58.5px;height:11.5px">Scene Root</div>
<div class="hdr" style="top:431px;height:8px;line-height:8px">Spring (L)<i></i></div>

<!-- frame borders -->
<div class="a" style="left:0;top:0;width:600px;height:1px;background:#505050"></div>
<div class="a" style="left:0;top:1px;width:1px;height:51px;background:#454545"></div>
<div class="a" style="left:0;top:52px;width:1px;height:400px;background:#181818"></div>
<div class="a" style="left:599px;top:1px;width:1px;height:64px;background:#505050"></div>
<div class="a" style="left:599px;top:65px;width:1px;height:387px;background:#181818"></div>
<div class="a" style="left:0;top:451px;width:600px;height:1px;background:#141414"></div>
</body></html>
